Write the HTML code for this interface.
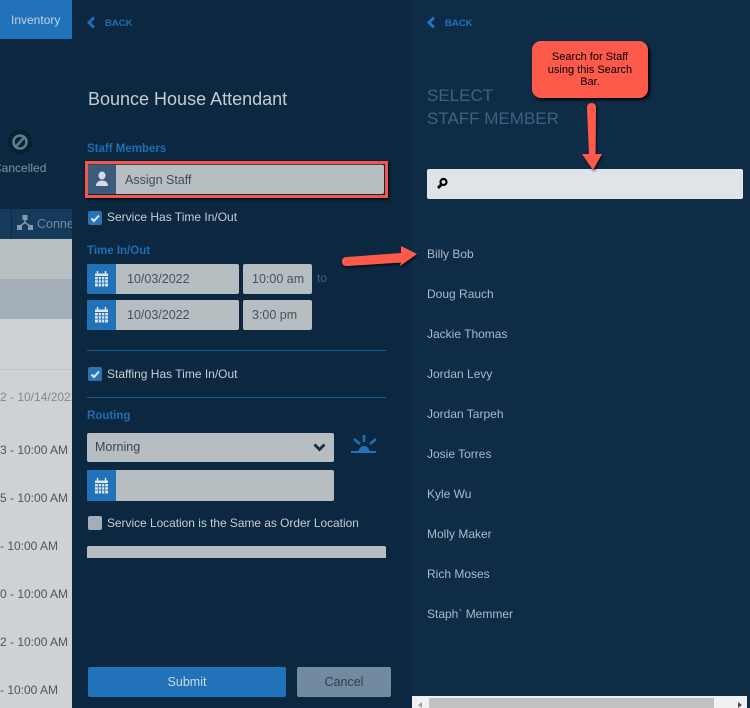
<!DOCTYPE html>
<html><head><meta charset="utf-8">
<style>
html,body{margin:0;padding:0}
body{width:750px;height:708px;overflow:hidden;position:relative;background:#0c2840;font-family:"Liberation Sans",sans-serif}
.a{position:absolute;white-space:nowrap}
.lbl{color:#1f6db4;font-size:11.500px;font-weight:bold;left:87px}
.field{position:absolute;background:#b7bec1;border-radius:2px;color:#47525c;font-size:12.500px;white-space:nowrap}
.cal{position:absolute;left:0;top:0;bottom:0;width:29px;background:#2272b9;border-radius:2px 0 0 2px}
.cal svg{position:absolute;left:7px;top:50%;margin-top:-8px}
.cb{position:absolute;left:88px;width:14px;height:14px;border-radius:2px;background:#2a73b5}
.cbt{color:#c6ced4;font-size:12px;left:107px}
.date{position:absolute;left:40px;top:50%;margin-top:-8px;line-height:16px}
.hr{position:absolute;left:87px;width:299px;height:1px;background:#1a5a90}
.t{left:0;color:#4a5661;font-size:12px;text-align:right;width:68px}
.n{left:427px;color:#a9bac8;font-size:12px}
.bk{color:#1f6db4;font-size:9.500px;font-weight:bold}
</style></head>
<body>
<!-- left background page -->
<div class="a" style="left:0;top:0;width:72px;height:39px;background:#2272b9"></div>
<div class="a" style="left:11px;top:13px;color:#bfd3e4;font-size:12px">Inventory</div>
<svg class="a" style="left:7px;top:129px" width="26" height="26" viewBox="0 0 26 26"><circle cx="13" cy="13" r="12.500" fill="#09202f"/><circle cx="13" cy="13" r="6.500" fill="none" stroke="#5d7c96" stroke-width="2.500"/><path d="M9 17.500L17 8.500" stroke="#5d7c96" stroke-width="2.500"/></svg>
<div class="a" style="left:-7px;top:161px;color:#84929f;font-size:12px;padding-left:0">Cancelled</div>
<div class="a" style="left:0;top:209px;width:72px;height:30px;background:#163a5a"></div>
<div class="a" style="left:11px;top:209px;width:1px;height:30px;background:#0f2b45"></div>
<svg class="a" style="left:17px;top:215px" width="16" height="16" viewBox="0 0 16 16"><g fill="#7f9ab2"><rect x="5.500" y="0" width="5" height="5"/><rect x="0" y="10" width="5" height="5"/><rect x="11" y="10" width="5" height="5"/></g><path d="M8 4V8M3 11L8 7.500L13 11" stroke="#7f9ab2" stroke-width="1.500" fill="none"/></svg>
<div class="a" style="left:37px;top:217px;width:35px;overflow:hidden;color:#6d8aa3;font-size:12.500px">Connections</div>
<div class="a" style="left:0;top:239px;width:72px;height:469px;background:#ced2d5"></div>
<div class="a" style="left:0;top:239px;width:72px;height:40px;background:#b9c0c3"></div>
<div class="a" style="left:0;top:279px;width:72px;height:40px;background:#a3aeb8"></div>
<div class="a" style="left:0;top:369px;width:72px;height:1px;background:#bdc2c6"></div>
<div class="a" style="left:0;top:390px;width:72px;overflow:hidden;color:#7f8992;font-size:12px">2 - 10/14/2022</div>
<div class="a t" style="top:443px">3 - 10:00 AM</div>
<div class="a t" style="top:491px">5 - 10:00 AM</div>
<div class="a t" style="top:539px;width:57px">- 10:00 AM</div>
<div class="a t" style="top:587px">0 - 10:00 AM</div>
<div class="a t" style="top:635px">2 - 10:00 AM</div>
<div class="a t" style="top:683px;width:57px">- 10:00 AM</div>

<!-- middle panel -->
<div class="a" style="left:72px;top:0;width:340px;height:708px;background:#0c2840"></div>
<svg class="a" style="left:87px;top:16px" width="9" height="13" viewBox="0 0 9 13"><path d="M7 1.500L2 6.500L7 11.500" fill="none" stroke="#1f6db4" stroke-width="3"/></svg>
<div class="a bk" style="left:105px;top:18px">BACK</div>
<div class="a" style="left:88px;top:89px;color:#c4ccd2;font-size:18px">Bounce House Attendant</div>
<div class="a lbl" style="top:143px">Staff Members</div>
<div class="a" style="left:85px;top:161px;width:303px;height:37px;box-sizing:border-box;border:3px solid #f4574a;box-shadow:1px 1px 3px #000"></div>
<div class="field" style="left:88px;top:164px;width:296px;height:30px;border-top:1px solid #3a4750;box-sizing:border-box;background:#b7bec1">
 <div class="a" style="left:0;top:0;width:28px;height:29px;background:#3a5b7b"></div>
 <svg class="a" style="left:7px;top:6px" width="14" height="16" viewBox="0 0 14 16"><ellipse cx="7" cy="4.500" rx="3.500" ry="4" fill="#d5dbe0"/><path d="M1 15C1 11 4 9.500 7 9.500C10 9.500 13 11 13 15Z" fill="#d5dbe0"/></svg>
 <div class="a" style="left:37px;top:8px;font-size:12.500px;color:#3f4c58">Assign Staff</div>
</div>
<div class="cb" style="top:211px"></div>
<svg class="a" style="left:88px;top:211px" width="14" height="14" viewBox="0 0 14 14"><path d="M3.500 7.500L6 10L11 4.500" fill="none" stroke="#dfe7ee" stroke-width="2"/></svg>
<div class="a cbt" style="top:210px">Service Has Time In/Out</div>
<div class="a lbl" style="top:245px">Time In/Out</div>

<div class="field" style="left:87px;top:264px;width:152px;height:30px"><div class="cal"><svg width="15" height="16" viewBox="0 0 15 16"><path d="M1 2.500H14V15.500H1Z" fill="#dce7f1"/><path d="M3.500 0V3M11.500 0V3" stroke="#dce7f1" stroke-width="1.500"/><path d="M1 5.500H14M1 8.800H14M1 12.100H14M4.300 5.500V15.500M7.500 5.500V15.500M10.700 5.500V15.500" stroke="#2272b9" stroke-width=".9"/></svg></div><div class="date">10/03/2022</div></div>
<div class="field" style="left:243px;top:264px;width:69px;height:30px"><div class="date" style="left:9px">10:00 am</div></div>
<div class="a" style="left:317px;top:271px;color:#3f6284;font-size:12px">to</div>
<div class="field" style="left:87px;top:300px;width:152px;height:30px"><div class="cal"><svg width="15" height="16" viewBox="0 0 15 16"><path d="M1 2.500H14V15.500H1Z" fill="#dce7f1"/><path d="M3.500 0V3M11.500 0V3" stroke="#dce7f1" stroke-width="1.500"/><path d="M1 5.500H14M1 8.800H14M1 12.100H14M4.300 5.500V15.500M7.500 5.500V15.500M10.700 5.500V15.500" stroke="#2272b9" stroke-width=".9"/></svg></div><div class="date">10/03/2022</div></div>
<div class="field" style="left:243px;top:300px;width:69px;height:30px"><div class="date" style="left:9px">3:00 pm</div></div>
<div class="hr" style="top:350px"></div>
<div class="cb" style="top:367px"></div>
<svg class="a" style="left:88px;top:367px" width="14" height="14" viewBox="0 0 14 14"><path d="M3.500 7.500L6 10L11 4.500" fill="none" stroke="#dfe7ee" stroke-width="2"/></svg>
<div class="a cbt" style="top:367px">Staffing Has Time In/Out</div>
<div class="hr" style="top:397px"></div>
<div class="a lbl" style="top:410px">Routing</div>

<div class="field" style="left:87px;top:433px;width:247px;height:29px"><div class="a" style="left:8px;top:7px;font-size:12.500px;color:#3b4650">Morning</div>
<svg class="a" style="left:226px;top:10px" width="13" height="9" viewBox="0 0 13 9"><path d="M1.500 1.500L6.500 6.500L11.500 1.500" fill="none" stroke="#12304b" stroke-width="2.800"/></svg></div>
<svg class="a" style="left:350px;top:434px" width="28" height="21" viewBox="0 0 28 21"><g fill="#2272b9"><rect x="1" y="17" width="25" height="2"/><path d="M8.500 18A5.500 6 0 0 1 19.500 18Z"/></g><path d="M14 1V8M4 5L10 10M26 5L20 10" stroke="#2272b9" stroke-width="2.500" fill="none"/></svg>
<div class="field" style="left:87px;top:470px;width:247px;height:31px"><div class="cal"><svg width="15" height="16" viewBox="0 0 15 16"><path d="M1 2.500H14V15.500H1Z" fill="#dce7f1"/><path d="M3.500 0V3M11.500 0V3" stroke="#dce7f1" stroke-width="1.500"/><path d="M1 5.500H14M1 8.800H14M1 12.100H14M4.300 5.500V15.500M7.500 5.500V15.500M10.700 5.500V15.500" stroke="#2272b9" stroke-width=".9"/></svg></div></div>
<div class="a" style="left:88px;top:516px;width:14px;height:14px;border-radius:2px;background:#a3aeb8"></div>
<div class="a cbt" style="top:516px;font-size:11.900px">Service Location is the Same as Order Location</div>
<div class="a" style="left:87px;top:546px;width:299px;height:12px;background:#b7bec1;border-radius:2px 2px 0 0"></div>

<div class="a" style="left:88px;top:667px;width:198px;height:30px;line-height:30px;background:#2272b9;border-radius:2px;color:#c9d9e7;font-size:12.500px;text-align:center">Submit</div>
<div class="a" style="left:297px;top:667px;width:94px;height:30px;line-height:30px;background:#728aa0;border-radius:2px;color:#2c3f50;font-size:12.500px;text-align:center">Cancel</div>

<!-- right panel -->
<div class="a" style="left:412px;top:0;width:338px;height:708px;background:#0f2c47"></div>
<svg class="a" style="left:427px;top:16px" width="9" height="13" viewBox="0 0 9 13"><path d="M7 1.500L2 6.500L7 11.500" fill="none" stroke="#2272c0" stroke-width="3"/></svg>
<div class="a bk" style="left:445px;top:18px;color:#2272c0">BACK</div>
<div class="a" style="left:427px;top:84px;color:#3f6080;font-size:17px;line-height:23px">SELECT<br>STAFF MEMBER</div>
<div class="a" style="left:427px;top:169px;width:316px;height:30px;background:#e0e4e8;border-radius:2px"></div>
<svg class="a" style="left:436px;top:177px" width="13" height="13" viewBox="0 0 13 13"><circle cx="7.500" cy="5" r="3" fill="none" stroke="#000" stroke-width="2.200"/><path d="M5 8L2 11" stroke="#000" stroke-width="2.800"/></svg>

<div class="a n" style="top:247px">Billy Bob</div>
<div class="a n" style="top:287px">Doug Rauch</div>
<div class="a n" style="top:327px">Jackie Thomas</div>
<div class="a n" style="top:367px">Jordan Levy</div>
<div class="a n" style="top:407px">Jordan Tarpeh</div>
<div class="a n" style="top:447px">Josie Torres</div>
<div class="a n" style="top:487px">Kyle Wu</div>
<div class="a n" style="top:527px">Molly Maker</div>
<div class="a n" style="top:567px">Rich Moses</div>
<div class="a n" style="top:607px">Staph` Memmer</div>

<!-- scrollbar -->
<div class="a" style="left:412px;top:696px;width:338px;height:12px;background:#f1f1f1"></div>
<div class="a" style="left:429px;top:698px;width:285px;height:10px;background:#c1c1c1"></div>
<div class="a" style="left:418px;top:702px;width:0;height:0;border:3.500px solid transparent;border-right:4px solid #a3a3a3;border-left:0"></div>
<div class="a" style="left:738px;top:702px;width:0;height:0;border:3.500px solid transparent;border-left:4px solid #505050;border-right:0"></div>
<div class="a" style="left:747px;top:696px;width:3px;height:12px;background:#0f2c47"></div>

<!-- annotations -->
<div class="a" style="left:532px;top:41px;width:116px;height:57px;box-sizing:border-box;padding-top:10px;background:#fd5a4b;border-radius:9px;box-shadow:2px 2px 3px #000;color:#000;font-size:11px;line-height:12.500px;text-align:center;white-space:normal">Search for Staff<br>using this Search<br>Bar.</div>
<svg class="a" style="left:335px;top:100px;overflow:visible" width="300" height="175" viewBox="0 0 300 175">
 <defs><filter id="s" x="-20%" y="-20%" width="140%" height="140%"><feDropShadow dx="1" dy="1.500" stdDeviation="1.200" flood-color="#000" flood-opacity=".8"/></filter></defs>
 <path filter="url(#s)" fill="#fd5a4b" d="M252 8Q252 3 256.500 3Q261 3 261 8L260.500 54H267L258 70L247 54H254Z"/>
 <path filter="url(#s)" fill="#fd5a4b" d="M12 157Q7 157 7 161.500Q7 166 12 166L66 162.500L65 166L82 154L66 146L66 153Z"/>
</svg>
</body></html>
